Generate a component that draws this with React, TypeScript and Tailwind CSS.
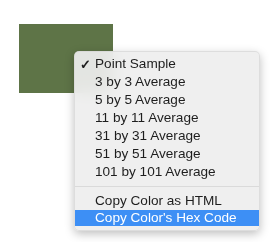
const items = [
  'Point Sample',
  '3 by 3 Average',
  '5 by 5 Average',
  '11 by 11 Average',
  '31 by 31 Average',
  '51 by 51 Average',
  '101 by 101 Average',
];

const App = () => {
  return (
    <div className="relative h-[242px] w-[273px] overflow-hidden bg-white font-['Liberation_Sans',Arial,sans-serif] text-[13.6px] text-[#1e1e1e]">
      {/* sampled colour swatch */}
      <div className="absolute left-[19px] top-[24px] h-[69px] w-[94px] bg-[#5e7447]" />

      {/* context menu */}
      <div className="absolute left-[74px] top-[51px] w-[186px] rounded-[5px] border border-[#d6d6d6]/70 bg-[rgba(238,238,238,0.93)] pb-[4px] pt-[3px] shadow-[0_3px_10px_rgba(0,0,0,0.25)] backdrop-blur-sm">
        {items.map((label, i) => (
          <div key={label} className="flex h-[18px] items-center">
            <span className="w-[20px] pl-[5px] text-[13px] font-bold leading-none">{i === 0 ? '✓' : ''}</span>
            <span>{label}</span>
          </div>
        ))}
        <div className="flex h-[11px] items-center">
          <div className="h-px w-full bg-[#dadada]" />
        </div>
        <div className="flex h-[18px] items-center pl-[20px]">Copy Color as HTML</div>
        <div className="flex h-[16px] items-center bg-[#3d8ff5] pl-[20px] text-white">Copy Color's Hex Code</div>
      </div>
    </div>
  );
};

export default App;
